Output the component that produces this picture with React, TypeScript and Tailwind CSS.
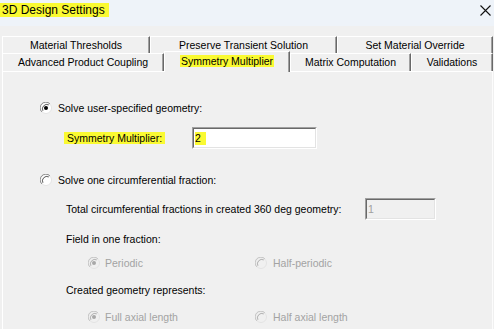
import React from 'react'

function Radio({ checked, disabled }: { checked?: boolean; disabled?: boolean }) {
  const dark = disabled ? '#c4c4c4' : '#8a8a8a'
  const darker = disabled ? '#b0b0b0' : '#5a5a5a'
  return (
    <svg width="12" height="12" viewBox="0 0 12 12" className="shrink-0">
      <circle cx="6" cy="6" r="5.5" fill={disabled ? '#f0f0f0' : '#ffffff'} stroke="#e3e3e3" />
      <path d="M1.8 9.9 A5.5 5.5 0 0 1 9.9 1.8" fill="none" stroke={dark} />
      <path d="M2.9 8.8 A4.4 4.4 0 0 1 8.8 2.9" fill="none" stroke={darker} />
      {checked && <circle cx="6" cy="6" r="2" fill={disabled ? '#a8a8a8' : '#000000'} />}
    </svg>
  )
}

function Field({ value, disabled, className }: { value: string; disabled?: boolean; className: string }) {
  return (
    <div className={`border border-t-[#a0a0a0] border-l-[#a0a0a0] border-b-white border-r-white ${className}`}>
      <div
        className={`h-full border border-t-[#696969] border-l-[#696969] border-b-[#e3e3e3] border-r-[#e3e3e3] flex items-center pl-[1px] ${
          disabled ? 'bg-[#f0f0f0] text-[#a0a0a0]' : 'bg-white text-black'
        }`}
      >
        <span className={disabled ? '' : 'bg-[#fafa32] pr-[5px] leading-[13px]'}>{value}</span>
      </div>
    </div>
  )
}

function Tab({ label, className }: { label: string; className: string }) {
  return (
    <div
      className={`flex items-center justify-center bg-[#f0f0f0] border-t border-l border-white border-r border-r-[#696969] shadow-[inset_-1px_0_0_#a0a0a0] ${className}`}
    >
      {label}
    </div>
  )
}

export default function App() {
  return (
    <div
      className="w-[494px] h-[329px] overflow-hidden bg-[#f0f0f0] text-black text-[10.5px] leading-none"
      style={{ fontFamily: '"Liberation Sans", Arial, sans-serif' }}
    >
      {/* Title bar */}
      <div className="h-[26px] bg-[#eef3f9] flex items-start justify-between">
        <span className="mt-[3px] bg-[#fafa32] text-[12px] leading-[14px] pl-[2px] pr-[4px]">3D Design Settings</span>
        <svg width="11" height="11" viewBox="0 0 11 11" className="mt-[5px] mr-[3px]">
          <path d="M0.5 0.5 L10.5 10.5 M10.5 0.5 L0.5 10.5" stroke="#111" strokeWidth="1.1" />
        </svg>
      </div>

      {/* Tabs */}
      <div className="pt-[10px] pl-[2px]">
        <div className="flex h-[17px]">
          <Tab label="Material Thresholds" className="w-[148px]" />
          <Tab label="Preserve Transient Solution" className="w-[187px]" />
          <Tab label="Set Material Override" className="w-[156px]" />
        </div>
        <div className="flex items-end h-[18px]">
          <Tab label="Advanced Product Coupling" className="w-[162px] h-[18px]" />
          <div className="relative z-10 w-[126px] h-[21px] -mb-[1px] bg-[#f0f0f0] border-t border-l border-white border-r border-r-[#696969] shadow-[inset_-1px_0_0_#a0a0a0] flex justify-center pt-[3px]">
            <span className="bg-[#fafa32] h-[12px] leading-[12px] px-[1px]">Symmetry Multiplier</span>
          </div>
          <Tab label="Matrix Computation" className="w-[121px] h-[18px]" />
          <Tab label="Validations" className="w-[82px] h-[18px]" />
        </div>

        {/* Panel */}
        <div className="relative h-[300px] w-[491px] border-t border-l border-white border-r border-r-[#fcfcfc] pt-[28px]">
          <div className="flex items-center h-[16px] pl-[37px] gap-[6px]">
            <Radio checked />
            <span>Solve user-specified geometry:</span>
          </div>
          <div className="flex items-center h-[22px] mt-[11px] pl-[61px]">
            <div className="w-[128px] shrink-0">
              <span className="inline-block bg-[#fafa32] h-[12px] leading-[12px] px-[3px]">Symmetry Multiplier:</span>
            </div>
            <Field value="2" className="w-[125px] h-[22px]" />
          </div>
          <div className="flex items-center h-[16px] mt-[23px] pl-[37px] gap-[6px]">
            <Radio />
            <span>Solve one circumferential fraction:</span>
          </div>
          <div className="flex items-center h-[22px] mt-[10px] pl-[63px]">
            <span className="w-[299px] shrink-0">Total circumferential fractions in created 360 deg geometry:</span>
            <Field value="1" disabled className="w-[71px] h-[22px]" />
          </div>
          <div className="flex items-center h-[16px] mt-[11px] pl-[63px]">
            <span>Field in one fraction:</span>
          </div>
          <div className="flex items-center h-[16px] mt-[8px] pl-[85px] text-[#a3a3a3]">
            <div className="flex items-center gap-[5px] w-[167px]">
              <Radio checked disabled />
              <span>Periodic</span>
            </div>
            <div className="flex items-center gap-[6px]">
              <Radio disabled />
              <span>Half-periodic</span>
            </div>
          </div>
          <div className="flex items-center h-[16px] mt-[11px] pl-[63px]">
            <span>Created geometry represents:</span>
          </div>
          <div className="flex items-center h-[16px] mt-[11px] pl-[85px] text-[#a3a3a3]">
            <div className="flex items-center gap-[5px] w-[167px]">
              <Radio checked disabled />
              <span>Full axial length</span>
            </div>
            <div className="flex items-center gap-[6px]">
              <Radio disabled />
              <span>Half axial length</span>
            </div>
          </div>
        </div>
      </div>
    </div>
  )
}
